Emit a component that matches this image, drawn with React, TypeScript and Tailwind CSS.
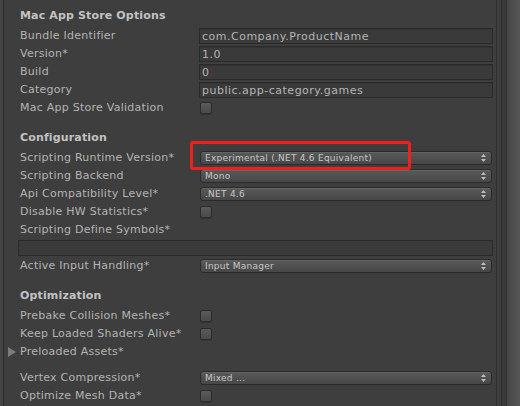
import type { ReactNode } from 'react'

const font = { fontFamily: '"DejaVu Sans", Verdana, sans-serif' }

function Row({ label, children, indent }: { label: string; children?: ReactNode; indent?: boolean }) {
  return (
    <div className="flex h-[18px] items-center">
      <div className="relative w-[195px] shrink-0 pl-[16px] pt-px text-[11px] tracking-[0.25px] text-[#b4b4b4] whitespace-nowrap">
        {indent && (
          <svg className="absolute left-[4px] top-[4px]" width="9" height="10" viewBox="0 0 9 10">
            <path d="M0 0 L8 5 L0 10 Z" fill="#7c7c7c" />
          </svg>
        )}
        {label}
      </div>
      <div className="flex-1 pr-[3px]">{children}</div>
    </div>
  )
}

function Field({ value }: { value: string }) {
  return (
    <div className="h-[16px] bg-[#3a3a3a] border border-[#2a2a2a] shadow-[inset_0_1px_0_#333] pl-[2px] text-[11px] leading-[15px] tracking-[0.5px] text-[#b4b4b4] whitespace-nowrap">
      {value}
    </div>
  )
}

function Toggle() {
  return (
    <div className="ml-[1px] w-[12px] h-[12px] rounded-[2px] border border-[#2a2a2a] bg-gradient-to-b from-[#5a5a5a] to-[#4a4a4a] shadow-[0_1px_0_#333]" />
  )
}

function Popup({ value }: { value: string }) {
  return (
    <div className="ml-[1px] mr-[1px] flex h-[14px] items-center justify-between rounded-[3px] border border-[#2b2b2b] bg-gradient-to-b from-[#595959] to-[#474747] pl-[4px] pr-[5px] shadow-[inset_0_1px_0_#646464]">
      <span className="text-[9px] leading-[12px] tracking-[0.25px] text-[#c8c8c8] whitespace-nowrap">{value}</span>
      <svg width="5" height="8" viewBox="0 0 5 8">
        <path d="M2.5 0 L5 3 L0 3 Z M0 5 L5 5 L2.5 8 Z" fill="#bdbdbd" />
      </svg>
    </div>
  )
}

function Heading({ children }: { children: ReactNode }) {
  return (
    <div className="flex h-[18px] items-center pl-[16px] pt-px mb-[2px] text-[11px] font-bold tracking-[0.15px] text-[#c2c2c2] whitespace-nowrap">
      {children}
    </div>
  )
}

export default function App() {
  return (
    <div className="flex w-[520px] h-[406px] overflow-hidden bg-[#3e3e3e]" style={font}>
      <div className="w-[3px] bg-[#444444]" />
      <div className="w-px bg-[#2b2b2b]" />
      <div className="relative flex-1 pt-[7px]">
        <Heading>Mac App Store Options</Heading>
        <Row label="Bundle Identifier"><Field value="com.Company.ProductName" /></Row>
        <Row label="Version*"><Field value="1.0" /></Row>
        <Row label="Build"><Field value="0" /></Row>
        <Row label="Category"><Field value="public.app-category.games" /></Row>
        <Row label="Mac App Store Validation"><Toggle /></Row>

        <div className="h-[12px]" />
        <Heading>Configuration</Heading>
        <Row label="Scripting Runtime Version*"><Popup value="Experimental (.NET 4.6 Equivalent)" /></Row>
        <Row label="Scripting Backend"><Popup value="Mono" /></Row>
        <Row label="Api Compatibility Level*"><Popup value=".NET 4.6" /></Row>
        <Row label="Disable HW Statistics*"><Toggle /></Row>
        <Row label="Scripting Define Symbols*" />
        <div className="flex h-[18px] items-center pl-[14px] pr-[3px]">
          <div className="h-[16px] w-full bg-[#3a3a3a] border border-[#2a2a2a]" />
        </div>
        <Row label="Active Input Handling*"><Popup value="Input Manager" /></Row>

        <div className="h-[12px]" />
        <Heading>Optimization</Heading>
        <Row label="Prebake Collision Meshes*"><Toggle /></Row>
        <Row label="Keep Loaded Shaders Alive*"><Toggle /></Row>
        <Row label="Preloaded Assets*" indent />
        <div className="h-[8px]" />
        <Row label="Vertex Compression*"><Popup value="Mixed ..." /></Row>
        <Row label="Optimize Mesh Data*"><Toggle /></Row>

        <div className="absolute left-[186px] top-[141px] w-[221px] h-[29px] rounded-[3px] border-[3px] border-[#f0201c]" />
      </div>
      <div className="w-px bg-[#2e2e2e]" />
      <div className="w-[4px] bg-[#3e3e3e]" />
      <div className="w-px bg-[#2c2c2c]" />
      <div className="w-[4px] bg-[#3a3a3a]" />
      <div className="w-[14px] bg-gradient-to-r from-[#464646] to-[#575757] border-l border-[#2f2f2f]" />
    </div>
  )
}
